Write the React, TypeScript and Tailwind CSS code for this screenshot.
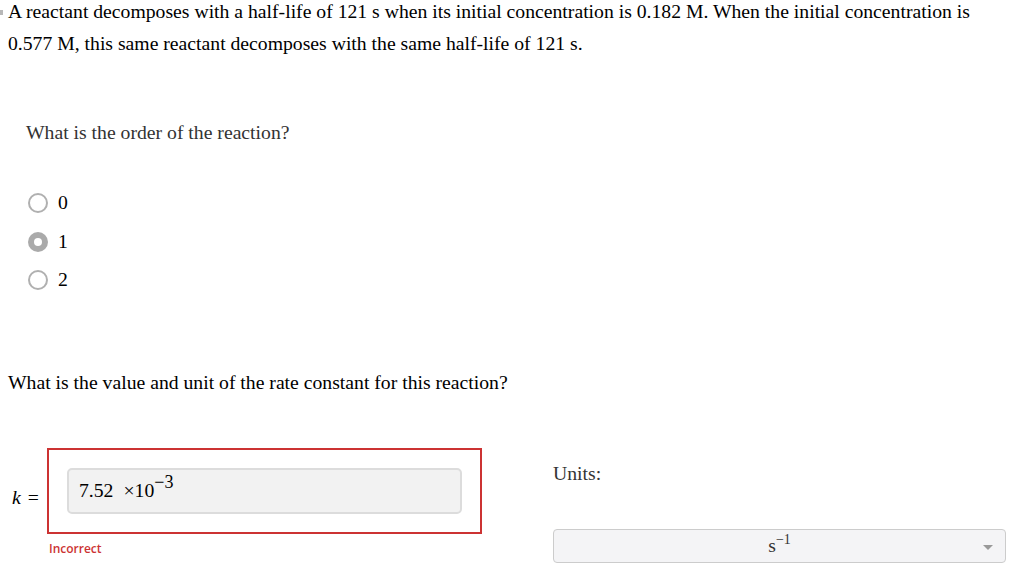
import React from "react";

const serif = { fontFamily: '"Liberation Serif", "Times New Roman", serif' };

function Radio({ checked, label }: { checked?: boolean; label: string }) {
  return (
    <label className="flex items-center h-[38.5px]">
      {checked ? (
        <span className="w-[20px] h-[20px] rounded-full bg-[#aaaaaa] flex items-center justify-center">
          <span className="w-[8px] h-[8px] rounded-full bg-white" />
        </span>
      ) : (
        <span className="w-[20px] h-[20px] rounded-full border-2 border-[#b0b0b0] bg-white" />
      )}
      <span className="ml-[10px] text-[19.7px] text-black">{label}</span>
    </label>
  );
}

export default function App() {
  return (
    <div className="relative w-[1024px] h-[573px] bg-white overflow-hidden text-black" style={serif}>
      <span className="absolute left-0 top-[10px] w-[3px] h-[5px] bg-[#b8b8b8]" />

      <p className="pl-[8px] pr-[30px] mt-[-5px] text-[19.7px] leading-[32px]">
        A reactant decomposes with a half-life of 121 s when its initial concentration is 0.182 M. When the initial
        concentration is 0.577 M, this same reactant decomposes with the same half-life of 121 s.
      </p>

      <p className="pl-[26px] mt-[57px] text-[19.7px] leading-[32px] text-[#333333]">What is the order of the reaction?</p>

      <div className="pl-[28px] mt-[36px] flex flex-col">
        <Radio label="0" />
        <Radio checked label="1" />
        <Radio label="2" />
      </div>

      <p className="pl-[8px] mt-[66px] text-[19.7px] leading-[32px]">What is the value and unit of the rate constant for this reaction?</p>

      <div className="flex mt-[50px]">
        <div className="flex">
          <div className="w-[47px] pl-[12px] pt-[37px] text-[19.7px] leading-[24px]">
            <i>k</i>
            <span className="ml-[7px]">=</span>
          </div>
          <div className="flex flex-col">
            <div className="w-[435px] h-[86px] border-2 border-[#cc3333] pl-[18px] pt-[18px]">
              <div className="w-[395px] h-[46px] rounded-[5px] border-2 border-[#dcdcdc] bg-[#f2f2f2] flex items-center pl-[10px] text-[19.7px]">
                <span>7.52</span>
                <span className="ml-[10px]">×10</span>
                <sup className="text-[18px] relative top-[-9px]">−3</sup>
              </div>
            </div>
            <span
              className="ml-[2px] mt-[6px] text-[12px] font-semibold text-[#cc3333]"
              style={{ fontFamily: '"Open Sans", "Liberation Sans", sans-serif' }}
            >
              Incorrect
            </span>
          </div>
        </div>

        <div className="ml-[71px] flex flex-col">
          <span className="mt-[13px] text-[19.7px] leading-[24px] text-[#333333]">Units:</span>
          <div className="relative mt-[44px] w-[453px] h-[34px] rounded-[4px] border border-[#cccccc] bg-[#f4f4f6] flex items-center justify-center text-[19.7px] text-[#333333]">
            <span>
              s<sup className="text-[14px] relative top-[-8px]">−1</sup>
            </span>
            <span className="absolute right-[12px] top-[15px] w-0 h-0 border-l-[5px] border-r-[5px] border-t-[5px] border-l-transparent border-r-transparent border-t-[#999999]" />
          </div>
        </div>
      </div>
    </div>
  );
}
